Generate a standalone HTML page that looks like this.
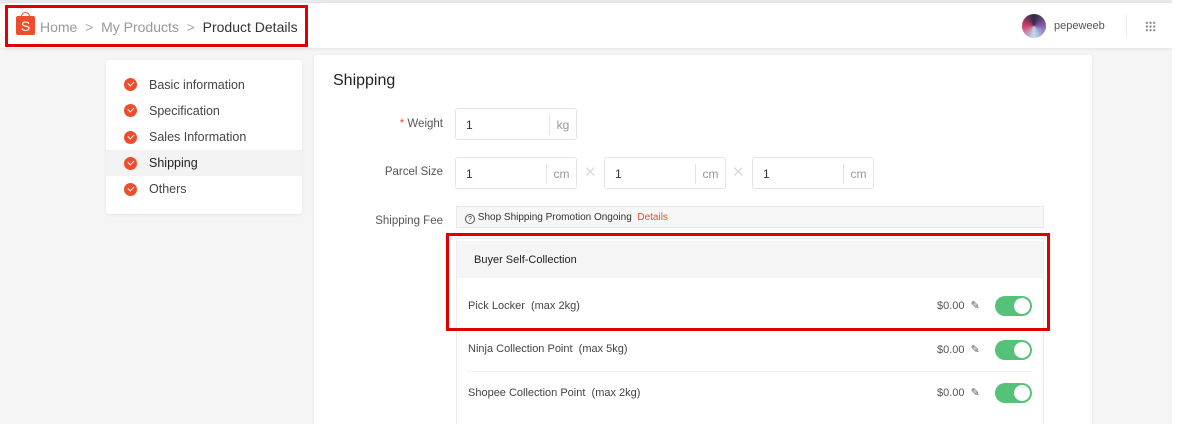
<!DOCTYPE html>
<html><head><style>
*{box-sizing:border-box;margin:0;padding:0}
html,body{width:1177px;height:424px;overflow:hidden}
body{background:#f5f5f5;font-family:"Liberation Sans",sans-serif;position:relative;color:#333}
.abs{position:absolute}
.hdr{left:0;top:3px;width:1172px;height:45px;background:#fff;box-shadow:0 1px 3px rgba(0,0,0,.08)}
.redbox{border:3px solid #e00000}
.card{background:#fff;border-radius:3px;box-shadow:0 1px 3px rgba(0,0,0,.08)}
.chk{width:13px;height:13px;border-radius:50%;background:#ee4d2d;left:124px}
.chk:after{content:"";position:absolute;left:3.5px;top:3px;width:5px;height:3px;border-left:1.5px solid #fff;border-bottom:1.5px solid #fff;transform:rotate(-45deg)}
.nav{left:149px;font-size:12.5px;color:#444}
.lbl{font-size:11.5px;color:#555;text-align:right;width:120px;left:323px}
.inp{border:1px solid #e5e5e5;border-radius:3px;height:32px;background:#fff;font-size:12px}
.inp .v{position:absolute;left:10px;top:9px;color:#333}
.inp .u{position:absolute;right:0;top:6px;height:20px;border-left:1px solid #e5e5e5;width:30px;text-align:center;line-height:20px;color:#999}
.x{color:#ddd;font-size:15px}
.row{font-size:11px;color:#444;left:468px}
.price{font-size:11px;color:#555;left:937px}
.tog{left:995px;width:37px;height:20px;border-radius:10px;background:#55c27a}
.tog:after{content:"";position:absolute;right:2px;top:2px;width:16px;height:16px;border-radius:50%;background:#fff}
</style></head><body>
<div class="abs" style="left:0;top:0;width:1177px;height:3px;background:#e8e8e8"></div>
<div class="abs hdr"></div>
<div class="abs" style="left:1172px;top:0;width:5px;height:424px;background:#fff"></div>
<div class="abs redbox" style="left:5px;top:5px;width:303px;height:42px"></div>
<div class="abs" style="left:16px;top:16px;width:19px;height:19px;background:#ee4d2d;border-radius:2px;color:#fff;font-size:14px;text-align:center;line-height:20px">S</div>
<div class="abs" style="left:21px;top:12px;width:9px;height:7px;border:1.5px solid #ee4d2d;border-bottom:none;border-radius:5px 5px 0 0"></div>
<div class="abs" style="left:40px;top:19px;font-size:14px;color:#999;white-space:nowrap">Home &nbsp;<span style="color:#aaa">&gt;</span>&nbsp; My Products &nbsp;<span style="color:#aaa">&gt;</span>&nbsp; <span style="color:#333">Product Details</span></div>
<div class="abs" style="left:1022px;top:14px;width:24px;height:24px;border-radius:50%;background:conic-gradient(#2a2a40,#8a5fb0,#c0e0f0,#d04070,#2a2a40)"></div>
<div class="abs" style="left:1054px;top:20px;font-size:11px;color:#555">pepeweeb</div>
<div class="abs" style="left:1126px;top:14px;width:1px;height:24px;background:#eee"></div>
<div class="abs" style="left:1145px;top:21px;width:11px;height:11px;background:radial-gradient(circle,#888 1px,transparent 1.3px) 0 0/3.7px 3.7px"></div>

<div class="abs card" style="left:106px;top:60px;width:196px;height:154px"></div>
<div class="abs" style="left:106px;top:150px;width:196px;height:26px;background:#f3f3f3"></div>
<div class="abs chk" style="top:78px"></div><div class="abs nav" style="top:78px">Basic information</div>
<div class="abs chk" style="top:104px"></div><div class="abs nav" style="top:104px">Specification</div>
<div class="abs chk" style="top:131px"></div><div class="abs nav" style="top:130px">Sales Information</div>
<div class="abs chk" style="top:157px"></div><div class="abs nav" style="top:156px;color:#222">Shipping</div>
<div class="abs chk" style="top:183px"></div><div class="abs nav" style="top:182px">Others</div>

<div class="abs card" style="left:314px;top:55px;width:778px;height:380px"></div>
<div class="abs" style="left:333px;top:72px;font-size:16px;color:#222">Shipping</div>

<div class="abs lbl" style="top:118px"><span style="color:#ee4d2d">*</span> Weight</div>
<div class="abs inp" style="left:455px;top:108px;width:122px"><span class="v">1</span><span class="u" style="width:27px">kg</span></div>
<div class="abs lbl" style="top:166px">Parcel Size</div>
<div class="abs inp" style="left:455px;top:157px;width:122px"><span class="v">1</span><span class="u">cm</span></div>
<div class="abs x" style="left:584px;top:163px">✕</div>
<div class="abs inp" style="left:604px;top:157px;width:122px"><span class="v">1</span><span class="u">cm</span></div>
<div class="abs x" style="left:732px;top:163px">✕</div>
<div class="abs inp" style="left:752px;top:157px;width:122px"><span class="v">1</span><span class="u">cm</span></div>

<div class="abs lbl" style="top:215px">Shipping Fee</div>
<div class="abs" style="left:456px;top:206px;width:588px;height:22px;background:#f7f7f7;border:1px solid #e8e8e8;font-size:10px;color:#333;padding:5px 0 0 8px"><span style="display:inline-block;width:10px;height:10px;border:1px solid #555;border-radius:50%;font-size:7px;text-align:center;line-height:9px;vertical-align:-1px">?</span> Shop Shipping Promotion Ongoing &nbsp;<span style="color:#ee4d2d">Details</span></div>
<div class="abs" style="left:456px;top:238px;width:588px;height:200px;background:#fff;border:1px solid #ebebeb"></div>
<div class="abs" style="left:457px;top:241px;width:586px;height:37px;background:#f5f5f5"></div>
<div class="abs" style="left:474px;top:254px;font-size:11px;color:#222">Buyer Self-Collection</div>
<div class="abs row" style="top:300px">Pick Locker &nbsp;(max 2kg)</div>
<div class="abs price" style="top:299px">$0.00 &nbsp;✎</div><div class="abs tog" style="top:296px"></div>
<div class="abs row" style="top:343px">Ninja Collection Point &nbsp;(max 5kg)</div>
<div class="abs price" style="top:343px">$0.00 &nbsp;✎</div><div class="abs tog" style="top:340px"></div>
<div class="abs" style="left:467px;top:371px;width:565px;height:1px;background:#eee"></div>
<div class="abs row" style="top:387px">Shopee Collection Point &nbsp;(max 2kg)</div>
<div class="abs price" style="top:386px">$0.00 &nbsp;✎</div><div class="abs tog" style="top:383px"></div>
<div class="abs redbox" style="left:446px;top:233px;width:604px;height:98px"></div>
</body></html>
